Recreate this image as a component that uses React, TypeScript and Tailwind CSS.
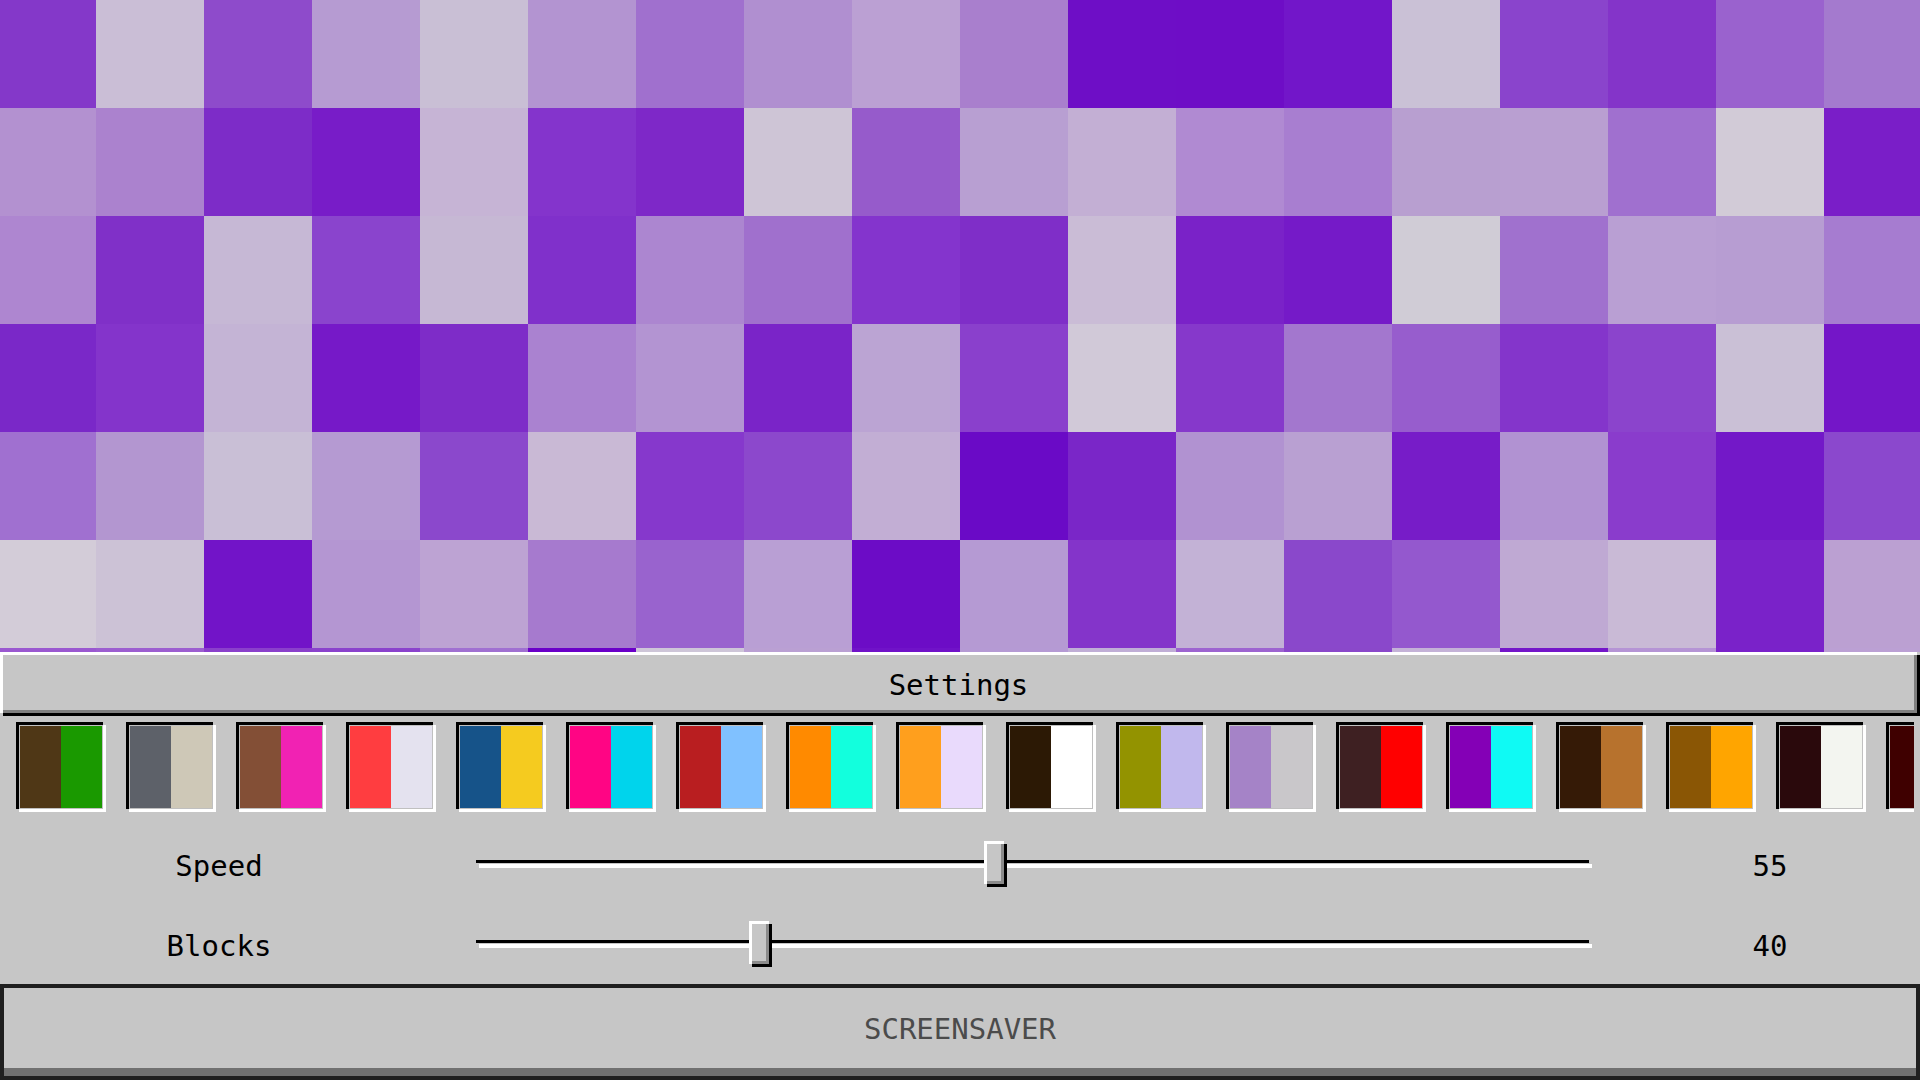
import React from "react";

const tiles: string[][] = [
  ["bg-[#8438c9]","bg-[#cabed6]","bg-[#8e4bcb]","bg-[#b69bd2]","bg-[#c9bfd5]","bg-[#b394d1]","bg-[#a070ce]","bg-[#b08fd0]","bg-[#bba0d3]","bg-[#a97fcd]","bg-[#6e0ec6]","bg-[#6e0dc6]","bg-[#7216c9]","bg-[#cac1d6]","bg-[#8a44cc]","bg-[#8434c9]","bg-[#9a62ce]","bg-[#a47ace]"],
  ["bg-[#b391d0]","bg-[#ab82ce]","bg-[#7d2cc8]","bg-[#781cc8]","bg-[#c6b4d5]","bg-[#8434cc]","bg-[#7e28c8]","bg-[#cec5d6]","bg-[#965bcb]","bg-[#b89fd2]","bg-[#c3afd4]","bg-[#b08ad2]","bg-[#a87ed0]","bg-[#b89fd0]","bg-[#b99fd1]","bg-[#a070cf]","bg-[#d2cbd7]","bg-[#7a1ec8]"],
  ["bg-[#ae86d0]","bg-[#8030c8]","bg-[#c6b8d5]","bg-[#8a44cd]","bg-[#c6b8d4]","bg-[#8030cb]","bg-[#ac86d0]","bg-[#a070cd]","bg-[#8434cd]","bg-[#7f2ec8]","bg-[#cabcd6]","bg-[#7a22c8]","bg-[#751ac8]","bg-[#d0ccd6]","bg-[#a071ce]","bg-[#b99fd3]","bg-[#b79dd2]","bg-[#a67cd0]"],
  ["bg-[#7a28c8]","bg-[#8434cb]","bg-[#c4b4d5]","bg-[#7619c8]","bg-[#7e2cc8]","bg-[#aa82d0]","bg-[#b394d2]","bg-[#7a24c8]","bg-[#bba4d3]","bg-[#8a40cc]","bg-[#d1c9d8]","bg-[#8638cb]","bg-[#a377ce]","bg-[#975dcd]","bg-[#8435cb]","bg-[#8b44cc]","bg-[#cac0d6]","bg-[#7416c8]"],
  ["bg-[#a070d0]","bg-[#b396d0]","bg-[#c9bfd6]","bg-[#b59ad2]","bg-[#8b48cc]","bg-[#c9b9d5]","bg-[#8638cc]","bg-[#8c48cc]","bg-[#c2aed4]","bg-[#6a0ac6]","bg-[#7a26c8]","bg-[#b192d1]","bg-[#b9a0d2]","bg-[#771cc8]","bg-[#b192d2]","bg-[#8a3ccc]","bg-[#7318c8]","bg-[#8b48cd]"],
  ["bg-[#d3ccd8]","bg-[#ccc2d6]","bg-[#7214c8]","bg-[#b496d2]","bg-[#bda3d3]","bg-[#a67ace]","bg-[#9963ce]","bg-[#b99fd4]","bg-[#6c0cc6]","bg-[#b59ad3]","bg-[#8434ca]","bg-[#c3b2d6]","bg-[#8a48cb]","bg-[#9458ce]","bg-[#bfa9d3]","bg-[#c9bad6]","bg-[#7a22c9]","bg-[#bba0d2]"],
  ["bg-[#9a58d0]","bg-[#9c5ed0]","bg-[#8a40cb]","bg-[#8a42cc]","bg-[#a070d1]","bg-[#6a00c8]","bg-[#cec6d8]","bg-[#baa0d3]","bg-[#7012c8]","bg-[#b59ad4]","bg-[#c0aed6]","bg-[#9d64d0]","bg-[#8a48ca]","bg-[#c4b2d7]","bg-[#7416c9]","bg-[#b594d5]","bg-[#7a22ca]","bg-[#bba0d4]"],
];

const swatches: [string, string][] = [
  ["bg-[#4f3716]", "bg-[#1a9900]"],
  ["bg-[#5d6169]", "bg-[#cec8b7]"],
  ["bg-[#834f36]", "bg-[#f122b3]"],
  ["bg-[#ff3d40]", "bg-[#e4e2ef]"],
  ["bg-[#165389]", "bg-[#f5cb1f]"],
  ["bg-[#ff0584]", "bg-[#00d4ec]"],
  ["bg-[#b91e20]", "bg-[#80c1ff]"],
  ["bg-[#ff8a00]", "bg-[#12ffdd]"],
  ["bg-[#ff9f1d]", "bg-[#e9dafc]"],
  ["bg-[#2c1905]", "bg-[#ffffff]"],
  ["bg-[#939300]", "bg-[#c1b8ed]"],
  ["bg-[#a583c7]", "bg-[#c9c7ca]"],
  ["bg-[#3e2022]", "bg-[#ff0000]"],
  ["bg-[#8400b6]", "bg-[#0ffaf4]"],
  ["bg-[#351a06]", "bg-[#b7722d]"],
  ["bg-[#8a5605]", "bg-[#ffa500]"],
  ["bg-[#2a090c]", "bg-[#f3f5f0]"],
  ["bg-[#3f0000]", "bg-[#e8e0c8]"],
];

const sliders = [
  { label: "Speed", value: 55, thumb: "left-[508px]" },
  { label: "Blocks", value: 40, thumb: "left-[273px]" },
];

function Swatch({ left, right }: { left: string; right: string }) {
  return (
    <div className="w-[84px] h-[84px] shrink-0 flex border border-[#c0c0c0] shadow-[-3px_-3px_0_0_#000,0_-3px_0_0_#000,-3px_0_0_0_#000,3px_3px_0_0_#fff,0_3px_0_0_#fff,3px_0_0_0_#fff]">
      <div className={`flex-1 ${left}`} />
      <div className={`flex-1 ${right}`} />
    </div>
  );
}

function SliderRow({ label, value, thumb }: { label: string; value: number; thumb: string }) {
  return (
    <div className="h-[80px] shrink-0 flex items-center">
      <div className="w-[438px] text-center pt-[6px] text-black">{label}</div>
      <div className="ml-[38px] relative w-[1116px] h-[46px]">
        <div className="absolute left-0 top-[20px] w-[1113px] h-[3px] bg-black shadow-[3px_4px_0_0_#fff,3px_5px_0_0_#fff]" />
        <div
          className={`absolute top-[1px] ${thumb} w-[20px] h-[43px] bg-[#c6c6c6] shadow-[inset_3px_3px_0_0_#fff,inset_-3px_-3px_0_0_#8b8b8b,3px_3px_0_0_#000]`}
        />
      </div>
      <div className="ml-auto w-[300px] text-center pt-[6px] text-black">{value}</div>
    </div>
  );
}

export default function App() {
  return (
    <div className="w-[1920px] h-[1080px] overflow-hidden bg-[#c6c6c6] flex flex-col font-['DejaVu_Sans_Mono','Liberation_Mono',monospace] text-[29px] leading-none">
      <div className="h-[652px] shrink-0 overflow-hidden">
        <div className="grid grid-cols-[repeat(18,108px)] auto-rows-[108px] w-[1944px] ml-[-12px]">
          {tiles.map((row, r) =>
            row.map((c, i) => <div key={`${r}-${i}`} className={c} />)
          )}
        </div>
      </div>

      <div className="h-[64px] shrink-0 pr-[3px] pb-[3px]">
        <div className="h-full bg-[#c6c6c6] shadow-[inset_3px_3px_0_0_#fff,inset_-3px_-3px_0_0_#808080,3px_3px_0_0_#000] flex items-center justify-center pt-[6px] text-black">
          Settings
        </div>
      </div>

      <div className="h-[107px] shrink-0 w-[1914px] overflow-hidden flex gap-[26px] pl-[19px] pt-[9px]">
        {swatches.map(([l, r], i) => (
          <Swatch key={i} left={l} right={r} />
        ))}
      </div>

      {sliders.map((s) => (
        <SliderRow key={s.label} {...s} />
      ))}

      <div className="mt-[1px] h-[96px] shrink-0 border-4 border-[#1f1f1f] bg-[#c6c6c6] shadow-[inset_0_-8px_0_0_#707070] flex items-center justify-center pb-[6px] text-[#4b4b4b]">
        SCREENSAVER
      </div>
    </div>
  );
}
